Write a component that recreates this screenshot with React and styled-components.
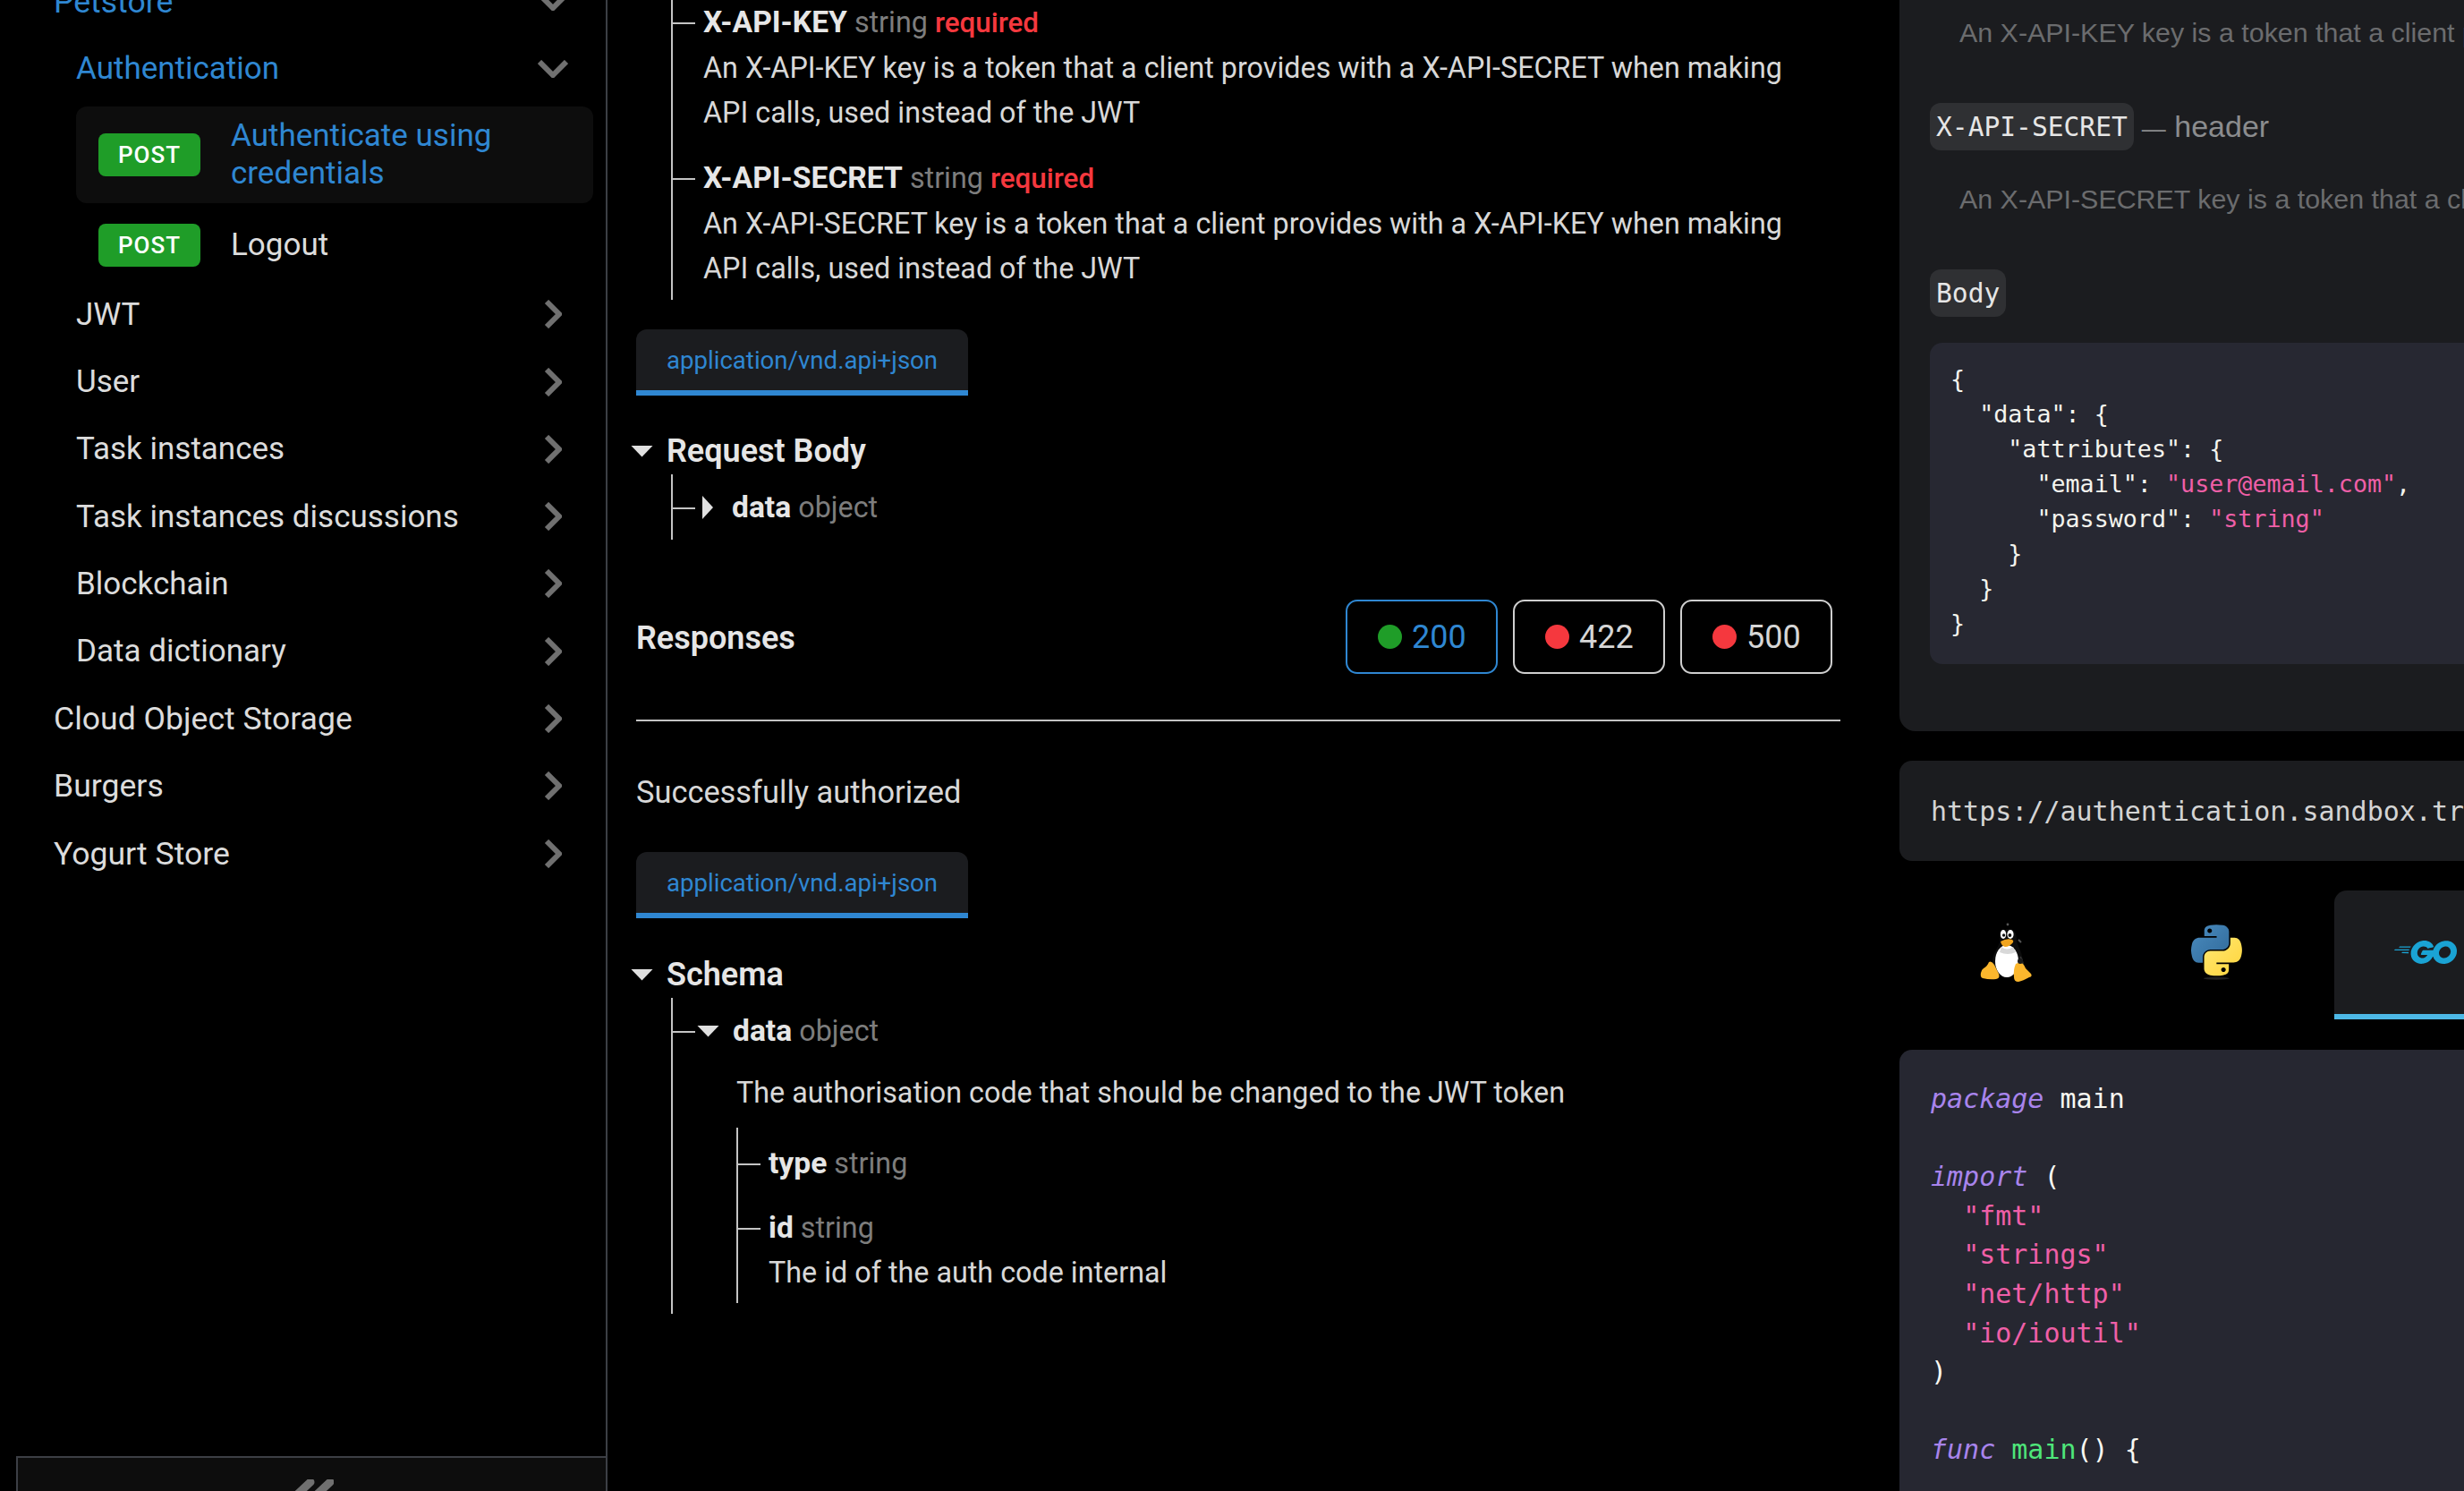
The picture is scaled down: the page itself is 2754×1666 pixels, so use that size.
import React from 'react'
import styled, {createGlobalStyle} from 'styled-components'
import {SiGo} from 'react-icons/si'

const GlobalStyle = createGlobalStyle`
  html, body {
    margin: 0;
    background: #000;
  }
  * {
    box-sizing: border-box;
  }
`

const Page = styled.div`
  display: flex;
  width: 2754px;
  height: 1666px;
  overflow: hidden;
  background: #000;
  color: #d8d8d8;
  font-family: Roboto, "Liberation Sans", sans-serif;
  font-size: 32.3px;
`

/* sidebar */
const Sidebar = styled.aside`
  position: relative;
  flex: none;
  width: 679px;
  height: 100%;
  border-right: 2px solid #3c3f45;
  font-size: 35px;
`

const NavList = styled.nav`
  margin-top: -36px;
`

const NavRow = styled.div`
  display: flex;
  align-items: center;
  justify-content: space-between;
  height: 75.3px;
  padding-left: ${p => (p.$level === 2 ? 85 : 60)}px;
  padding-right: ${p => (p.$wide ? 42 : 49)}px;
  color: ${p => (p.$active ? '#2f87d2' : '#dcdcdc')};
  font-size: ${p => (p.$level === 2 ? 35 : 35.6)}px;
`

const Chevron = styled.svg`
  flex: none;
  fill: none;
  stroke: #707070;
  stroke-width: 6;
`

const DoubleChevron = styled(Chevron)`
  stroke-width: 9;
  stroke-linecap: round;
`

const Endpoint = styled.div`
  display: flex;
  align-items: center;
  gap: 34px;
  margin: ${p => (p.$active ? '4px 14px 0 85px' : '0 14px 0 85px')};
  padding: ${p => (p.$active ? '0 25px' : '7px 25px 0')};
  height: ${p => (p.$active ? 108 : 87)}px;
  border-radius: 12px;
  background: ${p => (p.$active ? '#0d0d0d' : 'transparent')};
  color: ${p => (p.$active ? '#2f87d2' : '#dcdcdc')};
  line-height: 42px;
`

const MethodBadge = styled.span`
  flex: none;
  display: flex;
  align-items: center;
  justify-content: center;
  width: 114px;
  height: 48px;
  border-radius: 8px;
  background: #1f9d28;
  color: #fff;
  font-size: 26px;
  font-weight: 500;
  letter-spacing: 1px;
`

const CollapseBar = styled.div`
  position: absolute;
  left: 18px;
  right: 0;
  top: 1627px;
  height: 60px;
  display: flex;
  justify-content: center;
  padding-top: 24px;
  background: #0d0d0d;
  border: 2px solid #3c3f45;
  border-right: none;
`

/* middle column */
const Main = styled.main`
  flex: none;
  width: 1444px;
  padding-left: 32px;
  padding-right: 66px;
`

const Tree = styled.div`
  margin-left: ${p => p.$left ?? 39}px;
  margin-top: ${p => p.$top ?? 0}px;
  height: ${p => p.$height}px;
  border-left: 2px solid #c4c4c4;
  padding-top: ${p => p.$pad ?? 0}px;
`

const Node = styled.div`
  position: relative;
  padding-left: ${p => p.$indent ?? 34}px;
  margin-bottom: ${p => p.$gap ?? 0}px;
  line-height: 50px;
  &::before {
    content: '';
    position: absolute;
    left: 0;
    top: 25px;
    width: 25px;
    height: 2px;
    background: #c4c4c4;
  }
`

const FieldName = styled.b`
  font-size: 33.6px;
  font-weight: 700;
  color: #e6e6e6;
`

const FieldType = styled.span`
  color: #7d7d7d;
`

const Required = styled.span`
  color: #f5383e;
  font-size: 31.4px;
  font-weight: 500;
`

const MediaTab = styled.div`
  display: flex;
  align-items: center;
  width: 371px;
  height: 74px;
  margin-top: ${p => p.$top}px;
  padding-left: 34px;
  background: #1b1c1f;
  border-bottom: 6px solid #2f87d2;
  border-radius: 12px 12px 0 0;
  color: #2f87d2;
  font-size: 27.6px;
`

const Section = styled.div`
  display: flex;
  align-items: center;
  height: 50px;
  margin-top: ${p => p.$top}px;
  margin-left: -6px;
  gap: 15px;
  font-size: 36px;
  font-weight: 600;
  color: #e6e6e6;
`

const Caret = styled.i`
  flex: none;
  display: block;
  width: ${p => (p.$side ? 12 : 25)}px;
  height: ${p => (p.$side ? 26 : 13)}px;
  background: #e0e0e0;
  clip-path: ${p =>
    p.$side ? 'polygon(0 0, 100% 50%, 0 100%)' : 'polygon(0 0, 100% 0, 50% 100%)'};
`

const NodeHead = styled.div`
  display: flex;
  align-items: center;
  gap: ${p => p.$gap}px;
  margin-top: -2px;
`

const ResponsesBar = styled.div`
  display: flex;
  align-items: center;
  justify-content: space-between;
  height: 83px;
  margin-top: 67px;
  padding-right: 9px;
`

const ResponsesTitle = styled.h3`
  margin: 2px 0 0;
  font-size: 36px;
  font-weight: 600;
  color: #e6e6e6;
`

const StatusGroup = styled.div`
  display: flex;
  gap: 17px;
`

const StatusButton = styled.div`
  display: flex;
  align-items: center;
  gap: 11px;
  width: 170px;
  height: 83px;
  padding-left: 34px;
  border: 2px solid ${p => (p.$active ? '#2f87d2' : '#cfcfcf')};
  border-radius: 13px;
  color: ${p => (p.$active ? '#2f87d2' : '#d6d6d6')};
  font-size: 36px;
`

const Dot = styled.span`
  width: 27px;
  height: 27px;
  border-radius: 50%;
  background: ${p => (p.$ok ? '#1f9d28' : '#f5383e')};
`

const Divider = styled.hr`
  margin: 51px 0 0;
  border: none;
  height: 2px;
  background: #c4c4c4;
`

const Paragraph = styled.p`
  margin: ${p => p.$top}px 0 0;
  font-size: 34.4px;
  line-height: 50px;
`

const NestedText = styled.p`
  margin: ${p => p.$top}px 0 0 ${p => p.$left}px;
  line-height: 50px;
`

/* right column */
const Aside = styled.section`
  flex: 1;
  min-width: 0;
  overflow: hidden;
`

const DocsPanel = styled.div`
  height: 817px;
  padding: 11px 0 0 34px;
  background: #1b1c1f;
  border-radius: 0 0 0 18px;
  font-family: "Liberation Sans", Arial, sans-serif;
  white-space: nowrap;
`

const MutedLine = styled.div`
  margin-top: ${p => p.$top ?? 0}px;
  margin-left: 33px;
  color: #6b6c6e;
  font-size: 30.4px;
  line-height: 50px;
`

const ChipLine = styled.div`
  display: flex;
  align-items: center;
  gap: 9px;
  height: 53px;
  margin-top: ${p => p.$top}px;
  color: #8b8c8e;
  font-size: 34px;
`

const Dash = styled.span`
  font-size: 27px;
`

const Chip = styled.code`
  display: flex;
  align-items: center;
  height: 53px;
  padding: 0 7px;
  background: #2f3033;
  border-radius: 12px;
  color: #e6e6e6;
  font-family: "DejaVu Sans Mono", monospace;
  font-size: 29.6px;
`

const JsonBlock = styled.pre`
  height: 359px;
  margin: 29px 0 0;
  padding: 21px 0 0 23px;
  background: #272832;
  border-radius: 14px 0 0 14px;
  color: #f4f4ee;
  font-family: "DejaVu Sans Mono", monospace;
  font-size: 26.7px;
  line-height: 39px;
`

const Str = styled.span`
  color: #ef5fa7;
`

const Keyword = styled.em`
  color: #a884ec;
  font-style: italic;
`

const Fn = styled.span`
  color: #4ee67a;
`

const UrlBar = styled.div`
  display: flex;
  align-items: center;
  height: 112px;
  margin-top: 33px;
  padding-left: 35px;
  background: #1b1c1f;
  border-radius: 14px 0 0 14px;
  color: #d4d4d4;
  font-family: "DejaVu Sans Mono", monospace;
  font-size: 30px;
  white-space: nowrap;
`

const LangTabs = styled.div`
  display: flex;
  gap: 30px;
  height: 144px;
  margin-top: 33px;
  padding-left: 18px;
`

const LangTab = styled.div`
  flex: none;
  display: flex;
  align-items: center;
  justify-content: center;
  width: 204px;
  height: 144px;
  border-radius: 14px 14px 0 0;
  background: ${p => (p.$active ? '#1b1c1f' : 'transparent')};
  border-bottom: 6px solid ${p => (p.$active ? '#4db8e6' : 'transparent')};
`

const GoIcon = styled(SiGo)`
  display: block;
  width: 70px;
  height: 70px;
  color: #1aa3d4;
`

const CodeBlock = styled.pre`
  height: 500px;
  margin: 34px 0 0;
  padding: 33px 0 0 35px;
  background: #262731;
  border-radius: 14px 0 0 0;
  color: #f8f8f2;
  font-family: "DejaVu Sans Mono", monospace;
  font-size: 30px;
  line-height: 43.6px;
`

const ChevronDown = () => (
  <Chevron width="34" height="20" viewBox="0 0 34 20">
    <polyline points="2,2 17,17 32,2" />
  </Chevron>
)

const ChevronRight = () => (
  <Chevron width="20" height="32" viewBox="0 0 20 32">
    <polyline points="3,2 17,16 3,30" />
  </Chevron>
)

const Tux = () => (
  <svg width="60" height="66" viewBox="0 0 60 66">
    <circle cx="31" cy="2" r="1.4" fill="#555" />
    <path d="M32 7c7 0 9 6 9 12 0 6 6 12 7 24 0 10-6 16-17 16S13 52 14 42c1-10 8-15 8-23 0-7 3-12 10-12z" fill="#0c0c0c" />
    <ellipse cx="30" cy="43" rx="13" ry="18" fill="#fff" />
    <path d="M24 27q6 5 13 0l3 6q-9 4-18 0z" fill="#d8d8d8" />
    <ellipse cx="26" cy="13" rx="3.2" ry="5" fill="#fff" />
    <ellipse cx="34" cy="13" rx="3.6" ry="5" fill="#fff" />
    <circle cx="26.6" cy="14" r="1.7" fill="#111" />
    <circle cx="33.4" cy="14" r="1.9" fill="#111" />
    <path d="M23 21q7-4 13-2 2 1 1 3-4 5-9 5-4-1-5-6z" fill="#f0a41e" />
    <path d="M43 19l3 3" stroke="#555" strokeWidth="2" />
    <path d="M45 38q5 7 1 16" stroke="#333" strokeWidth="2" fill="none" />
    <path d="M10 44q3-2 6 3l5 10q2 5-3 6-7 1-15-1-3-1-2-6 1-4 3-5 4-2 6-7z" fill="#fbb72d" />
    <path d="M40 46q5-3 8 0 2 2 3 5l6 6q2 3-2 4-7 4-12 5-5 0-5-5-1-8 2-15z" fill="#fbb72d" />
    <circle cx="45" cy="43" r="3" fill="#1a1a1a" />
  </svg>
)

const Python = () => (
  <svg width="57" height="63" viewBox="0 0 111 122">
    <defs>
      <linearGradient id="pyBlue" x1="0" y1="0" x2="1" y2="1">
        <stop offset="0" stopColor="#4a8cc0" />
        <stop offset="1" stopColor="#306998" />
      </linearGradient>
      <linearGradient id="pyYellow" x1="0" y1="0" x2="1" y2="1">
        <stop offset="0" stopColor="#ffd43b" />
        <stop offset="1" stopColor="#ffe873" />
      </linearGradient>
    </defs>
    <ellipse cx="55" cy="117" rx="28" ry="3" fill="#222" />
    <path fill="url(#pyBlue)" d="M54.9 0c-4.6 0-9 .4-12.8 1.1C30.7 3.1 28.7 7.3 28.7 15v10.2h26.9v3.4H18.6C10.8 28.6 4 33.3 1.9 42.2c-2.5 10.2-2.6 16.5 0 27.1 1.9 7.9 6.5 13.6 14.3 13.6h9.2V70.7c0-8.9 7.7-16.7 16.8-16.7h26.9c7.5 0 13.4-6.2 13.4-13.7V15c0-7.3-6.1-12.7-13.4-13.9C64.2.3 59.5 0 54.9 0zM40.4 8.2c2.8 0 5 2.3 5 5.1s-2.2 5-5 5-5-2.3-5-5 2.2-5.1 5-5.1z" />
    <path fill="url(#pyYellow)" transform="rotate(180 55.4 55.6)" d="M54.9 0c-4.6 0-9 .4-12.8 1.1C30.7 3.1 28.7 7.3 28.7 15v10.2h26.9v3.4H18.6C10.8 28.6 4 33.3 1.9 42.2c-2.5 10.2-2.6 16.5 0 27.1 1.9 7.9 6.5 13.6 14.3 13.6h9.2V70.7c0-8.9 7.7-16.7 16.8-16.7h26.9c7.5 0 13.4-6.2 13.4-13.7V15c0-7.3-6.1-12.7-13.4-13.9C64.2.3 59.5 0 54.9 0zM40.4 8.2c2.8 0 5 2.3 5 5.1s-2.2 5-5 5-5-2.3-5-5 2.2-5.1 5-5.1z" />
  </svg>
)

const navTail = ['JWT', 'User', 'Task instances', 'Task instances discussions', 'Blockchain', 'Data dictionary']
const navRoot = ['Cloud Object Storage', 'Burgers', 'Yogurt Store']

const App = () => (
  <Page>
    <GlobalStyle />
    <Sidebar>
      <NavList>
        <NavRow $active $wide>Petstore<ChevronDown /></NavRow>
        <NavRow $active $wide $level={2}>Authentication<ChevronDown /></NavRow>
        <Endpoint $active>
          <MethodBadge>POST</MethodBadge>
          <span>Authenticate using credentials</span>
        </Endpoint>
        <Endpoint>
          <MethodBadge>POST</MethodBadge>
          <span>Logout</span>
        </Endpoint>
        {navTail.map(name => (
          <NavRow key={name} $level={2}>{name}<ChevronRight /></NavRow>
        ))}
        {navRoot.map(name => (
          <NavRow key={name}>{name}<ChevronRight /></NavRow>
        ))}
      </NavList>
      <CollapseBar>
        <DoubleChevron width="48" height="36" viewBox="0 0 48 36">
          <polyline points="22,3 6,18 22,33" />
          <polyline points="44,3 28,18 44,33" />
        </DoubleChevron>
      </CollapseBar>
    </Sidebar>

    <Main>
      <Tree $height={335}>
        <Node $gap={23}>
          <FieldName>X-API-KEY</FieldName> <FieldType>string</FieldType> <Required>required</Required>
          <br />
          An X-API-KEY key is a token that a client provides with a X-API-SECRET when making
          <br />
          API calls, used instead of the JWT
        </Node>
        <Node>
          <FieldName>X-API-SECRET</FieldName> <FieldType>string</FieldType> <Required>required</Required>
          <br />
          An X-API-SECRET key is a token that a client provides with a X-API-KEY when making
          <br />
          API calls, used instead of the JWT
        </Node>
      </Tree>
      <MediaTab $top={33}>application/vnd.api+json</MediaTab>
      <Section $top={37}><Caret />Request Body</Section>
      <Tree $top={1} $height={73} $pad={14}>
        <Node $indent={33}>
          <NodeHead $gap={21}>
            <Caret $side />
            <span><FieldName>data</FieldName> <FieldType>object</FieldType></span>
          </NodeHead>
        </Node>
      </Tree>
      <ResponsesBar>
        <ResponsesTitle>Responses</ResponsesTitle>
        <StatusGroup>
          <StatusButton $active><Dot $ok />200</StatusButton>
          <StatusButton><Dot />422</StatusButton>
          <StatusButton><Dot />500</StatusButton>
        </StatusGroup>
      </ResponsesBar>
      <Divider />
      <Paragraph $top={54}>Successfully authorized</Paragraph>
      <MediaTab $top={42}>application/vnd.api+json</MediaTab>
      <Section $top={38}><Caret />Schema</Section>
      <Tree $top={1} $height={353} $pad={14}>
        <Node $indent={27}>
          <NodeHead $gap={15}>
            <Caret />
            <span><FieldName>data</FieldName> <FieldType>object</FieldType></span>
          </NodeHead>
          <NestedText $top={19} $left={44}>The authorisation code that should be changed to the JWT token</NestedText>
          <Tree $left={44} $top={14} $height={196} $pad={15}>
            <Node $gap={22}>
              <FieldName>type</FieldName> <FieldType>string</FieldType>
            </Node>
            <Node>
              <FieldName>id</FieldName> <FieldType>string</FieldType>
              <br />
              The id of the auth code internal
            </Node>
          </Tree>
        </Node>
      </Tree>
    </Main>

    <Aside>
      <DocsPanel>
        <MutedLine>An X-API-KEY key is a token that a client provides</MutedLine>
        <ChipLine $top={54}><Chip>X-API-SECRET</Chip><span><Dash>—</Dash> header</span></ChipLine>
        <MutedLine $top={29}>An X-API-SECRET key is a token that a client provides</MutedLine>
        <ChipLine $top={54}><Chip>Body</Chip></ChipLine>
        <JsonBlock>{`{
  "data": {
    "attributes": {
      "email": `}<Str>"user@email.com"</Str>{`,
      "password": `}<Str>"string"</Str>{`
    }
  }
}`}</JsonBlock>
      </DocsPanel>
      <UrlBar>https://authentication.sandbox.tr</UrlBar>
      <LangTabs>
        <LangTab><Tux /></LangTab>
        <LangTab><Python /></LangTab>
        <LangTab $active><GoIcon /></LangTab>
      </LangTabs>
      <CodeBlock><Keyword>package</Keyword>{` main

`}<Keyword>import</Keyword>{` (
  `}<Str>"fmt"</Str>{`
  `}<Str>"strings"</Str>{`
  `}<Str>"net/http"</Str>{`
  `}<Str>"io/ioutil"</Str>{`
)

`}<Keyword>func</Keyword> <Fn>main</Fn>{`() {`}</CodeBlock>
    </Aside>
  </Page>
)

export default App
